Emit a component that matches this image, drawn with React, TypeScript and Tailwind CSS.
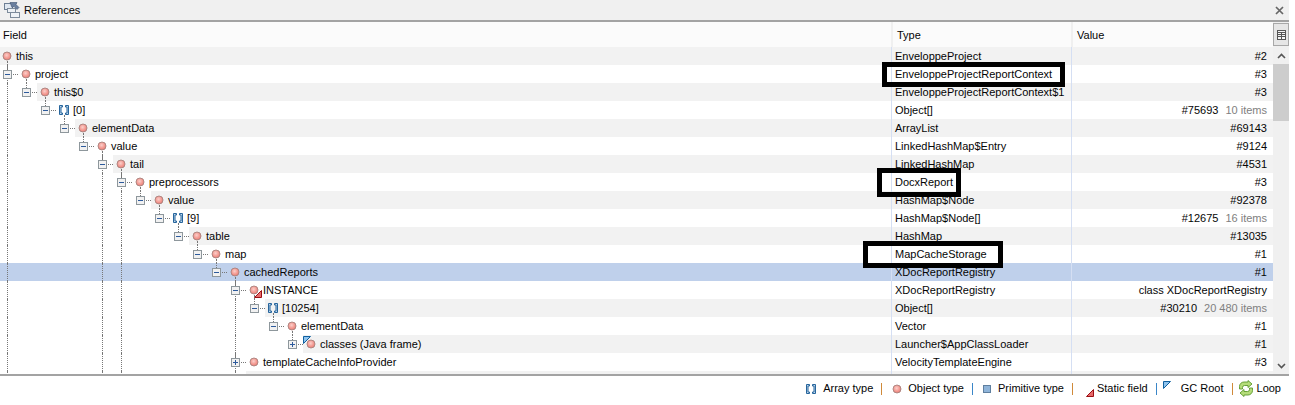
import React from "react";

type Row = {
  name: string;
  k: number;
  icon: "ball" | "array";
  type: string;
  value: string;
  items?: string;
  box?: "-" | "+";
  guides: number[];
  marker?: "static" | "gc";
};

const x = (k: number) => 7 + 19 * k;

const rows: Row[] = [
  { name: "this", k: 0, icon: "ball", type: "EnveloppeProject", value: "#2", guides: [] },
  { name: "project", k: 1, icon: "ball", type: "EnveloppeProjectReportContext", value: "#3", box: "-", guides: [0] },
  { name: "this$0", k: 2, icon: "ball", type: "EnveloppeProjectReportContext$1", value: "#3", box: "-", guides: [0] },
  { name: "[0]", k: 3, icon: "array", type: "Object[]", value: "#75693", items: "10 items", box: "-", guides: [0] },
  { name: "elementData", k: 4, icon: "ball", type: "ArrayList", value: "#69143", box: "-", guides: [0] },
  { name: "value", k: 5, icon: "ball", type: "LinkedHashMap$Entry", value: "#9124", box: "-", guides: [0] },
  { name: "tail", k: 6, icon: "ball", type: "LinkedHashMap", value: "#4531", box: "-", guides: [0, 5] },
  { name: "preprocessors", k: 7, icon: "ball", type: "DocxReport", value: "#3", box: "-", guides: [0, 5, 6] },
  { name: "value", k: 8, icon: "ball", type: "HashMap$Node", value: "#92378", box: "-", guides: [0, 5, 6] },
  { name: "[9]", k: 9, icon: "array", type: "HashMap$Node[]", value: "#12675", items: "16 items", box: "-", guides: [0, 5, 6] },
  { name: "table", k: 10, icon: "ball", type: "HashMap", value: "#13035", box: "-", guides: [0, 5, 6] },
  { name: "map", k: 11, icon: "ball", type: "MapCacheStorage", value: "#1", box: "-", guides: [0, 5, 6] },
  { name: "cachedReports", k: 12, icon: "ball", type: "XDocReportRegistry", value: "#1", box: "-", guides: [0, 5, 6] },
  { name: "INSTANCE", k: 13, icon: "ball", type: "XDocReportRegistry", value: "class XDocReportRegistry", box: "-", guides: [0, 5, 6, 12], marker: "static" },
  { name: "[10254]", k: 14, icon: "array", type: "Object[]", value: "#30210", items: "20 480 items", box: "-", guides: [0, 5, 6, 12] },
  { name: "elementData", k: 15, icon: "ball", type: "Vector", value: "#1", box: "-", guides: [0, 5, 6, 12] },
  { name: "classes (Java frame)", k: 16, icon: "ball", type: "Launcher$AppClassLoader", value: "#1", box: "+", guides: [0, 5, 6, 12], marker: "gc" },
  { name: "templateCacheInfoProvider", k: 13, icon: "ball", type: "VelocityTemplateEngine", value: "#3", box: "+", guides: [0, 5, 6, 12] },
  { name: "", k: 13, icon: "ball", type: "", value: "", guides: [0, 5, 6, 12] },
];

function Ball() {
  return (
    <svg width="10" height="10" viewBox="0 0 10 10" className="shrink-0">
      <defs>
        <radialGradient id="ball" cx="45%" cy="40%" r="60%">
          <stop offset="0%" stopColor="#fbd0cb" />
          <stop offset="70%" stopColor="#f2928a" />
          <stop offset="100%" stopColor="#e5807a" />
        </radialGradient>
      </defs>
      <circle cx="5" cy="5" r="4" fill="url(#ball)" stroke="#a8837f" strokeWidth="0.9" />
    </svg>
  );
}

function ArrayIcon() {
  return (
    <svg width="10" height="10" viewBox="0 0 10 10" className="shrink-0">
      <path d="M3.5 .5H.5v9h3V8H2V2h1.5z" fill="#bcd6ec" stroke="#27659c" strokeWidth="1" />
      <path d="M6.5 .5h3v9h-3V8H8V2H6.5z" fill="#bcd6ec" stroke="#27659c" strokeWidth="1" />
    </svg>
  );
}

function StaticMark() {
  return (
    <svg width="8" height="8" viewBox="0 0 8 8">
      <path d="M7.5 .5v7h-7z" fill="#e66a6a" stroke="#9c0f14" strokeWidth="1" />
    </svg>
  );
}

function GcMark() {
  return (
    <svg width="8" height="8" viewBox="0 0 8 8">
      <path d="M.5 .5h7l-7 7z" fill="#8ec3ee" stroke="#11609f" strokeWidth="1" />
    </svg>
  );
}

function ExpandBox({ kind }: { kind: "-" | "+" }) {
  return (
    <svg width="9" height="9" viewBox="0 0 9 9">
      <rect x=".5" y=".5" width="8" height="8" fill="#f1f1f1" stroke="#8e979c" />
      <path d="M2 4.5h5" stroke="#2c5a9c" />
      {kind === "+" && <path d="M4.5 2v5" stroke="#2c5a9c" />}
    </svg>
  );
}

function Sep({ blue }: { blue?: boolean }) {
  return <span className={`w-[1px] h-[12px] ml-[8px] ${blue ? "bg-[#3a86c8]" : "bg-[#d08a3a]"}`} />;
}

function FieldCell({ row, gray }: { row: Row; gray: boolean }) {
  const left = x(row.k) - 8;
  const parent = x(row.k - 1);
  return (
    <div className="relative h-[18px] overflow-hidden">
      <div
        className={`flex items-center h-full pl-[3px] gap-[4px] ${gray ? "bg-[#f2f2f2]" : ""}`}
        style={{ marginLeft: left }}
      >
        {row.name && (row.icon === "ball" ? <Ball /> : <ArrayIcon />)}
        <span className="whitespace-nowrap">{row.name}</span>
      </div>
      {row.guides.map((g) => (
        <span
          key={g}
          className="absolute top-0 bottom-0 border-l border-dotted border-[#777777]"
          style={{ left: x(g) }}
        />
      ))}
      {row.k > 0 && row.name && (
        <span
          className="absolute top-0 h-[5px] border-l border-dotted border-[#777777]"
          style={{ left: parent }}
        />
      )}
      {row.box && (
        <span className="absolute top-[5px] flex" style={{ left: parent - 4 }}>
          <ExpandBox kind={row.box} />
        </span>
      )}
      {row.box && (
        <span
          className="absolute top-[9px] w-[5px] border-t border-dotted border-[#777777]"
          style={{ left: parent + 6 }}
        />
      )}
      {row.box !== "+" && row.name && (
        <span
          className="absolute top-[14px] h-[4px] border-l border-dotted border-[#777777]"
          style={{ left: x(row.k) }}
        />
      )}
      {row.marker === "static" && (
        <span className="absolute top-[9px] flex" style={{ left: x(row.k) }}>
          <StaticMark />
        </span>
      )}
      {row.marker === "gc" && (
        <span className="absolute top-[1px] flex" style={{ left: x(row.k) - 8 }}>
          <GcMark />
        </span>
      )}
    </div>
  );
}

export default function App() {
  return (
    <div className="relative w-[1289px] h-[405px] bg-white flex flex-col text-[11px] text-[#050505] font-['Liberation_Sans',sans-serif]">
      {/* title */}
      <div className="h-[22px] shrink-0 bg-[#f0f0f0] border-b-2 border-[#a3a3a3] flex items-center justify-between pl-[4px] pr-[5px]">
        <div className="flex items-center gap-[4px]">
          <svg width="16" height="16" viewBox="0 0 16 16">
            <rect x=".5" y="1.5" width="8" height="6" fill="#dfe7f0" stroke="#6d7f94" />
            <rect x="3.5" y="6.5" width="8" height="4" fill="#eef2f6" stroke="#7d8b9b" />
            <rect x="6.5" y="10.5" width="9" height="5" fill="#eef2f6" stroke="#7d8b9b" />
            <path d="M6 .5h7l-1 2 3 3-2 2-3-3-2 1z" fill="#6a7f9e" stroke="#3e5270" strokeWidth=".6" />
          </svg>
          <span>References</span>
        </div>
        <svg width="9" height="9" viewBox="0 0 9 9">
          <path d="M1 1l7 7M8 1l-7 7" stroke="#666666" strokeWidth="1.7" />
        </svg>
      </div>

      {/* table */}
      <div className="h-[354px] shrink-0 flex border-b-2 border-[#a3a3a3] overflow-hidden">
        <div className="w-[1273px] shrink-0 flex flex-col">
          <div className="h-[25px] shrink-0 grid grid-cols-[891px_180px_202px] items-center bg-[#fbfbfb]">
            <span className="pl-[3px] pt-[2px]">Field</span>
            <span className="pl-[4px] pt-[2px] h-full flex items-center border-l-2 border-[#f0f0f0]">Type</span>
            <span className="pl-[4px] pt-[2px] h-full flex items-center border-l-2 border-[#f0f0f0]">Value</span>
          </div>
          {rows.map((row, i) => {
            const selected = i === 12;
            const gray = i % 2 === 0;
            const bg = selected ? "bg-[#bfd0eb]" : gray ? "bg-[#f2f2f2]" : "bg-white";
            return (
              <div
                key={i}
                className={`grid grid-cols-[891px_180px_202px] h-[18px] shrink-0 ${selected ? "bg-[#bfd0eb]" : ""}`}
              >
                <FieldCell row={row} gray={gray && !selected} />
                <div className={`pl-[3px] flex items-center border-l border-[#d5dff3] whitespace-nowrap ${bg}`}>
                  {row.type}
                </div>
                <div className={`pr-[6px] flex items-center justify-end gap-[7px] border-l border-[#d5dff3] whitespace-nowrap ${bg}`}>
                  <span>{row.value}</span>
                  {row.items && <span className="text-[#808080]">{row.items}</span>}
                </div>
              </div>
            );
          })}
        </div>

        {/* scrollbar */}
        <div className="w-[16px] shrink-0 flex flex-col bg-[#f0f0f0]">
          <div className="h-[23px] mt-[1px] mb-[1px] shrink-0 border border-[#a8a8a8] bg-[#e6e6e6] flex items-center justify-center">
            <svg width="9" height="10" viewBox="0 0 9 10">
              <rect x=".5" y=".5" width="8" height="9" fill="#f4f4f4" stroke="#555555" />
              <path d="M.5 2.5h8M.5 4.5h8M.5 6.5h8M4.5 2.5v7" stroke="#555555" />
            </svg>
          </div>
          <div className="h-[17px] shrink-0 flex items-center justify-center">
            <svg width="9" height="6" viewBox="0 0 9 6">
              <path d="M1 5l3.5-3.5L8 5" fill="none" stroke="#555555" strokeWidth="1.6" />
            </svg>
          </div>
          <div className="h-[57px] shrink-0 bg-[#cdcdcd]" />
          <div className="flex-1" />
          <div className="h-[17px] shrink-0 flex items-center justify-center">
            <svg width="9" height="6" viewBox="0 0 9 6">
              <path d="M1 1l3.5 3.5L8 1" fill="none" stroke="#555555" strokeWidth="1.6" />
            </svg>
          </div>
        </div>
      </div>

      {/* legend */}
      <div className="h-[25px] flex items-center justify-end pr-[8px]">
        <ArrayIcon />
        <span className="ml-[7px]">Array type</span>
        <Sep />
        <span className="ml-[10px] flex"><Ball /></span>
        <span className="ml-[6px]">Object type</span>
        <Sep blue />
        <span className="ml-[10px] w-[8px] h-[8px] bg-[#8fb4d9] border border-[#5f7f9f]" />
        <span className="ml-[7px]">Primitive type</span>
        <Sep />
        <span className="ml-[13px] flex mt-[9px]"><StaticMark /></span>
        <span className="ml-[3px]">Static field</span>
        <Sep blue />
        <span className="ml-[6px] flex mb-[8px]"><GcMark /></span>
        <span className="ml-[10px]">GC Root</span>
        <Sep />
        <svg width="16" height="17" viewBox="0 0 16 17" className="ml-[5px]">
          <path d="M1.5 9V6.5A4.5 4.5 0 0 1 6 2h4V.5l4 3.5-4 3.5V5.5H6.5a2 2 0 0 0-2 2V9z" fill="#b5dc7a" stroke="#5c9a2c" strokeWidth=".9" />
          <path d="M14.5 8v2.5A4.5 4.5 0 0 1 10 15H6v1.5l-4-3.5 4-3.5v2h3.5a2 2 0 0 0 2-2V8z" fill="#b5dc7a" stroke="#5c9a2c" strokeWidth=".9" />
        </svg>
        <span className="ml-[3px]">Loop</span>
      </div>

      {/* black annotation frames drawn over the screenshot */}
      <div className="absolute left-[882px] top-[62px] w-[183px] h-[25px] border-[5px] border-black" />
      <div className="absolute left-[877px] top-[168px] w-[84px] h-[29px] border-[5px] border-black" />
      <div className="absolute left-[863px] top-[241px] w-[140px] h-[27px] border-[5px] border-black" />
    </div>
  );
}
